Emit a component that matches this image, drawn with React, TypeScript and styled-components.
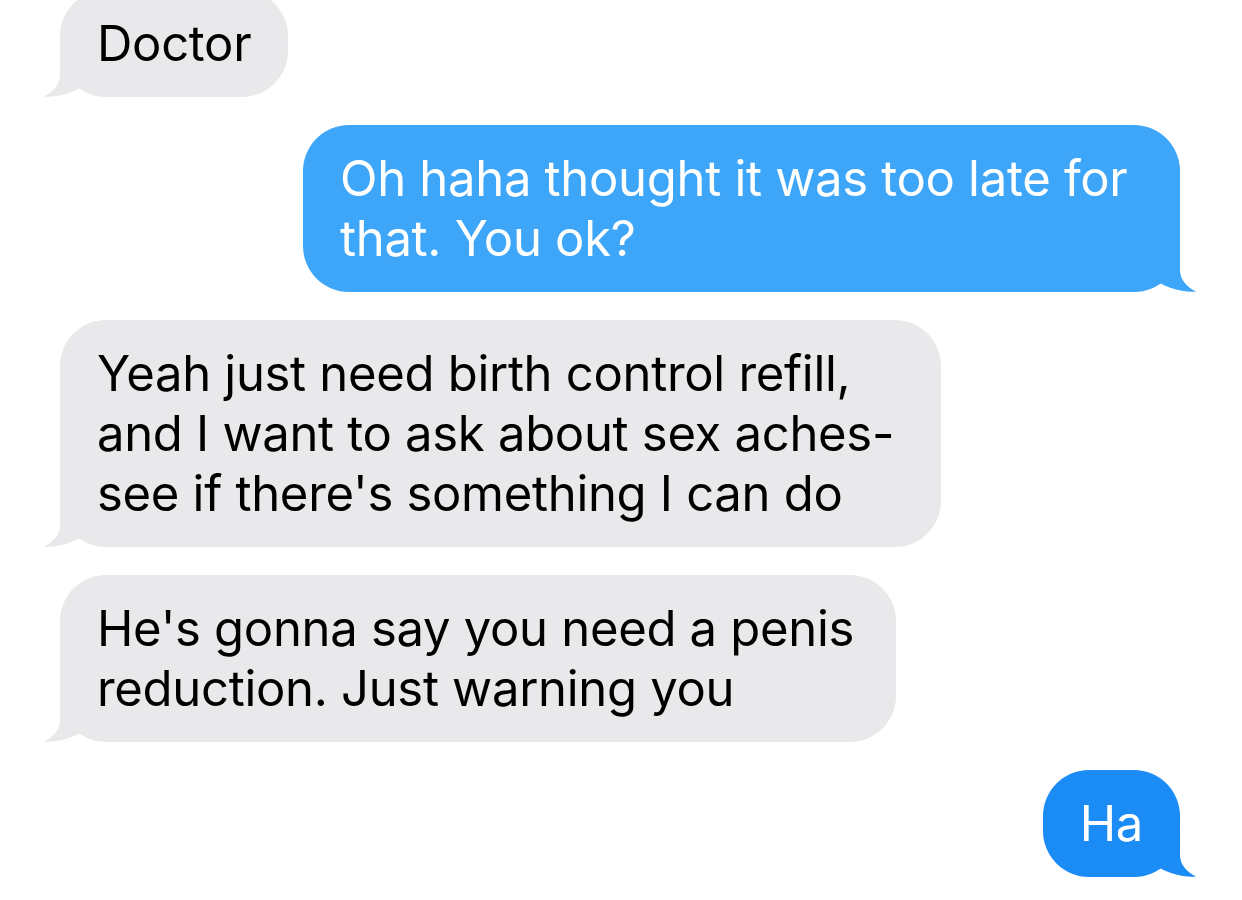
import React from "react";
import styled, { createGlobalStyle } from "styled-components";

const Global = createGlobalStyle`
  html, body { margin: 0; padding: 0; background: #ffffff; }
  body { overflow: hidden; }
`;

const Thread = styled.div`
  display: flex;
  flex-direction: column;
  gap: 28px;
  padding: 0 62px 0 60px;
  margin-top: -10px;
  width: 1242px;
  box-sizing: border-box;
  font-family: Inter, "Noto Sans", sans-serif;
`;

const Row = styled.div<{ $sent?: boolean }>`
  display: flex;
  justify-content: ${(p) => (p.$sent ? "flex-end" : "flex-start")};
`;

const Bubble = styled.div<{ $sent?: boolean; $tone?: "light" | "deep"; $w?: number }>`
  position: relative;
  box-sizing: border-box;
  ${(p) => (p.$w ? `width: ${p.$w}px;` : "")}
  padding: 23.5px 37px 23.5px 37px;
  border-radius: 46px;
  font-size: 49px;
  line-height: 60px;
  letter-spacing: -0.3px;
  background: ${(p) =>
    p.$sent ? (p.$tone === "deep" ? "#1b8cf5" : "#3ea6f9") : "#e9e9eb"};
  color: ${(p) => (p.$sent ? "#ffffff" : "#000000")};
  white-space: nowrap;
`;

const Tail = styled.svg<{ $sent?: boolean }>`
  position: absolute;
  bottom: 0;
  width: 45px;
  height: 45px;
  ${(p) =>
    p.$sent
      ? "right: -17px; transform: scaleX(-1);"
      : "left: -17px;"}
`;

function BubbleTail({ sent, color }: { sent?: boolean; color: string }) {
  return (
    <Tail $sent={sent} viewBox="0 0 45 45">
      <path
        d="M17,0 L17,23 C17,33 10,40 1,44.5 C13,45.5 27,42 37,36 L45,38 L45,0 Z"
        fill={color}
      />
    </Tail>
  );
}

type Msg = { sent?: boolean; tone?: "light" | "deep"; width?: number; lines: string[] };

const messages: Msg[] = [
  { lines: ["Doctor"] },
  {
    sent: true,
    tone: "light",
    width: 877,
    lines: ["Oh haha thought it was too late for", "that. You ok?"],
  },
  {
    width: 881,
    lines: [
      "Yeah just need birth control refill,",
      "and I want to ask about sex aches-",
      "see if there's something I can do",
    ],
  },
  { width: 836, lines: ["He's gonna say you need a penis", "reduction. Just warning you"] },
  { sent: true, tone: "deep", lines: ["Ha"] },
];

export default function App() {
  return (
    <>
      <Global />
      <Thread>
        {messages.map((m, i) => {
          const color = m.sent ? (m.tone === "deep" ? "#1b8cf5" : "#3ea6f9") : "#e9e9eb";
          return (
            <Row key={i} $sent={m.sent}>
              <Bubble $sent={m.sent} $tone={m.tone} $w={m.width}>
                {m.lines.map((l, j) => (
                  <React.Fragment key={j}>
                    {j > 0 && <br />}
                    {l}
                  </React.Fragment>
                ))}
                <BubbleTail sent={m.sent} color={color} />
              </Bubble>
            </Row>
          );
        })}
      </Thread>
    </>
  );
}
